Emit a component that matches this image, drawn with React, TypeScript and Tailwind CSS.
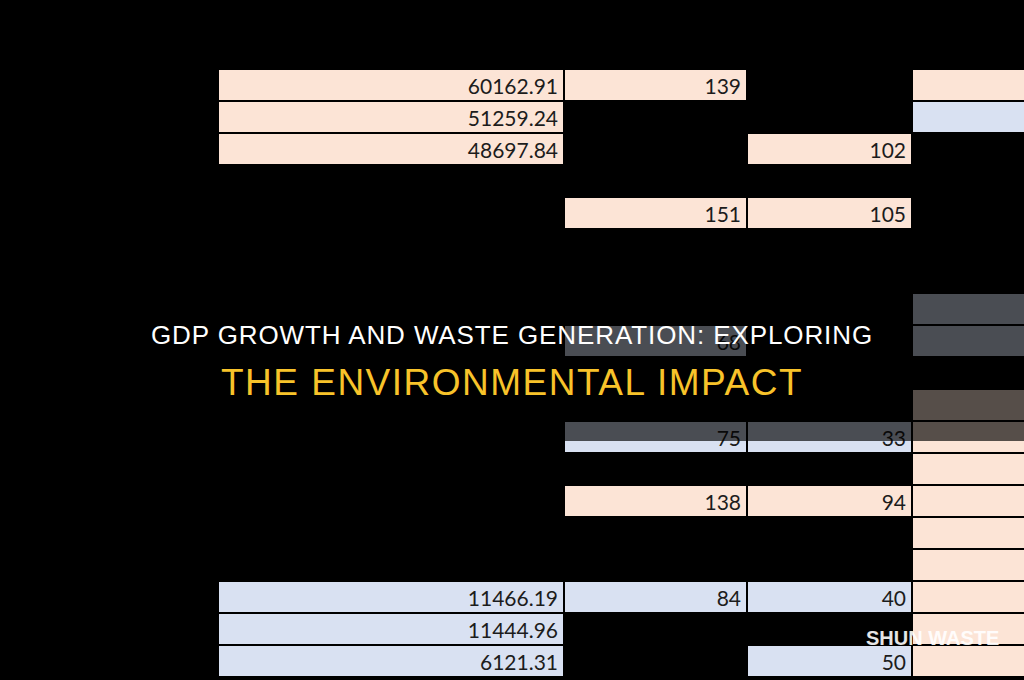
import React from "react";

type Cell = null | { c: "p" | "b"; t?: string };

const P = (t?: string): Cell => ({ c: "p", t });
const B = (t?: string): Cell => ({ c: "b", t });
const _ = null;

const rows: Cell[][] = [
  [P("60162.91"), P("139"), _, P()],
  [P("51259.24"), _, _, B()],
  [P("48697.84"), _, P("102"), _],
  [_, _, _, _],
  [_, P("151"), P("105"), _],
  [_, _, _, _],
  [_, _, _, _],
  [_, _, _, B()],
  [_, B("68"), _, B()],
  [_, _, _, _],
  [_, _, _, P()],
  [_, B("75"), B("33"), P()],
  [_, _, _, P()],
  [_, P("138"), P("94"), P()],
  [_, _, _, P()],
  [_, _, _, P()],
  [B("11466.19"), B("84"), B("40"), P()],
  [B("11444.96"), _, _, P()],
  [B("6121.31"), _, B("50"), P()],
];

function CellBox({ cell }: { cell: Cell }) {
  if (!cell) return <div className="h-[30px]" />;
  const bg = cell.c === "p" ? "bg-[#fce4d6]" : "bg-[#d9e1f2]";
  return (
    <div
      className={`h-[30px] ${bg} flex justify-end pr-[5px] pt-[1px] text-[21px] leading-[30px] text-[#1c1c1c]`}
      style={{ fontFamily: "Lato, 'Open Sans', sans-serif" }}
    >
      {cell.t ?? ""}
    </div>
  );
}

export default function App() {
  return (
    <div className="relative w-[1024px] h-[680px] bg-black overflow-hidden">
      <div className="pt-[70px] pl-[219px]">
        <div className="grid grid-cols-[344px_181px_163px_1fr] gap-x-[2px] gap-y-[2px]">
          {rows.map((r, i) => (
            <React.Fragment key={i}>
              {r.map((c, j) => (
                <CellBox key={j} cell={c} />
              ))}
            </React.Fragment>
          ))}
        </div>
      </div>

      <div className="absolute left-0 right-0 top-[250px] h-[191px] bg-black/[0.66]" />

      <div
        className="absolute left-0 right-0 top-[322px] flex flex-col items-center gap-[16px]"
        style={{ fontFamily: "'Liberation Sans', Arial, sans-serif" }}
      >
        <div className="text-[26px] leading-[26px] tracking-[0.9px] text-white whitespace-nowrap">
          GDP GROWTH AND WASTE GENERATION: EXPLORING
        </div>
        <div className="text-[37px] leading-[37px] tracking-[1.5px] text-[#f8c32a] whitespace-nowrap">
          THE ENVIRONMENTAL IMPACT
        </div>
      </div>

      <div
        className="absolute left-[866px] top-[628px] text-[20px] leading-[20px] font-bold text-white/90 whitespace-nowrap"
        style={{ fontFamily: "'Liberation Sans', Arial, sans-serif" }}
      >
        SHUN WASTE
      </div>
    </div>
  );
}
